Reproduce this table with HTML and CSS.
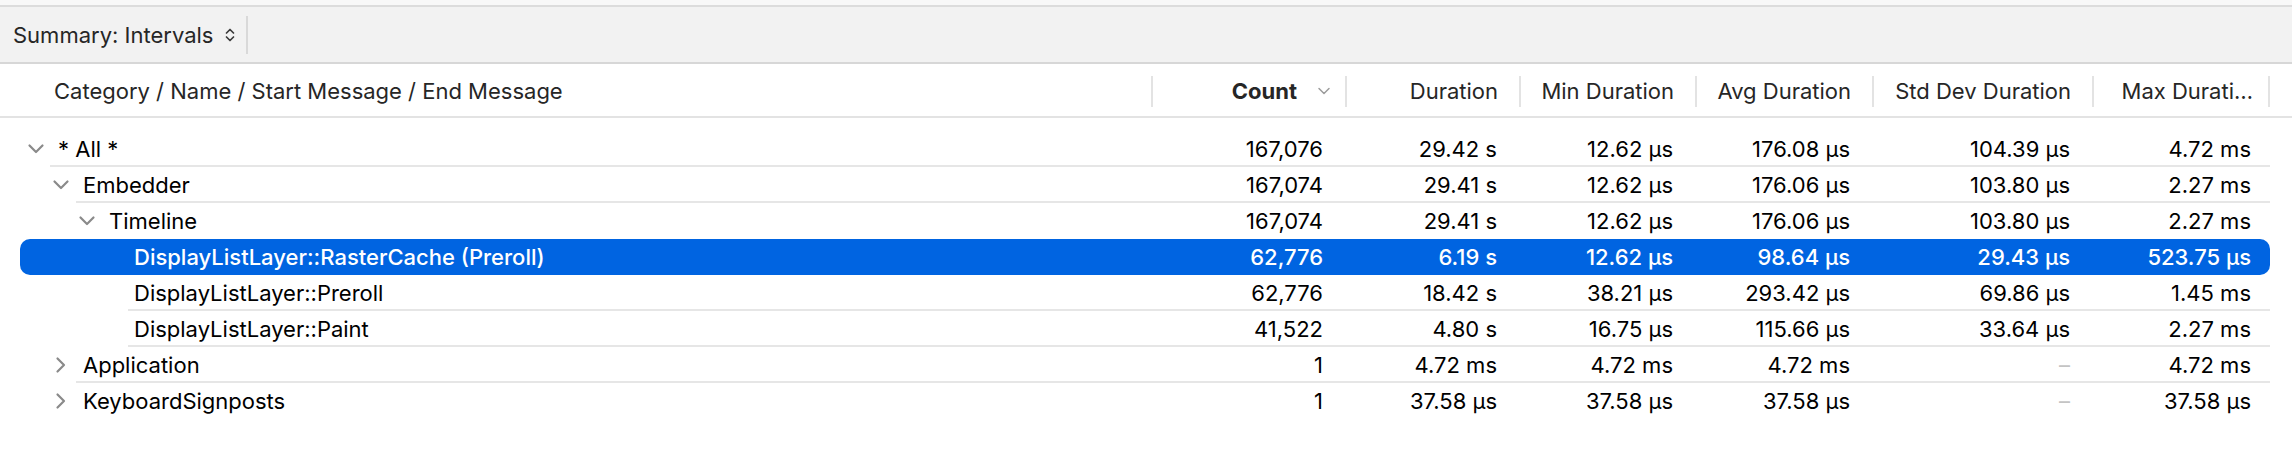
FILE: index.html
```html
<!DOCTYPE html>
<html>
<head>
<meta charset="utf-8">
<link rel="stylesheet" href="styles.css">
</head>
<body>
<div class="window">
  <div class="top-strip"></div>
  <div class="toolbar">
    <div class="popup">
      <span class="popup-label">Summary: Intervals</span>
      <svg class="updown" width="12" height="18" viewBox="0 0 12 18"><path d="M2.5 7 L6 3.5 L9.5 7 M2.5 11 L6 14.5 L9.5 11" fill="none" stroke="#3c3c3c" stroke-width="1.7" stroke-linecap="round" stroke-linejoin="round"/></svg>
    </div>
    <div class="tb-divider"></div>
  </div>
  <div class="header">
    <div class="hcell name-h"><span>Category / Name / Start Message / End Message</span></div>
    <div class="hcell num sorted"><span class="bold">Count</span><svg class="sort" width="14" height="10" viewBox="0 0 14 10"><path d="M2 2.5 L7 7.5 L12 2.5" fill="none" stroke="#9c9c9c" stroke-width="1.5" stroke-linecap="round" stroke-linejoin="round"/></svg></div>
    <div class="hcell num">Duration</div>
    <div class="hcell num">Min Duration</div>
    <div class="hcell num">Avg Duration</div>
    <div class="hcell num">Std Dev Duration</div>
    <div class="hcell num last">Max Durati…</div>
  </div>
  <div class="rows">
    <div class="row l0 sep">
      <div class="name"><span class="disc"><svg width="18" height="12" viewBox="0 0 18 12"><path d="M2.5 2.5 L9 9 L15.5 2.5" fill="none" stroke="#8a8a8a" stroke-width="2.2" stroke-linecap="round" stroke-linejoin="round"/></svg></span><span class="label">* All *</span></div>
      <div class="c">167,076</div><div class="c">29.42 s</div><div class="c">12.62 µs</div><div class="c">176.08 µs</div><div class="c">104.39 µs</div><div class="c last">4.72 ms</div>
    </div>
    <div class="row l1 sep">
      <div class="name"><span class="disc"><svg width="18" height="12" viewBox="0 0 18 12"><path d="M2.5 2.5 L9 9 L15.5 2.5" fill="none" stroke="#8a8a8a" stroke-width="2.2" stroke-linecap="round" stroke-linejoin="round"/></svg></span><span class="label">Embedder</span></div>
      <div class="c">167,074</div><div class="c">29.41 s</div><div class="c">12.62 µs</div><div class="c">176.06 µs</div><div class="c">103.80 µs</div><div class="c last">2.27 ms</div>
    </div>
    <div class="row l2">
      <div class="name"><span class="disc"><svg width="18" height="12" viewBox="0 0 18 12"><path d="M2.5 2.5 L9 9 L15.5 2.5" fill="none" stroke="#8a8a8a" stroke-width="2.2" stroke-linecap="round" stroke-linejoin="round"/></svg></span><span class="label">Timeline</span></div>
      <div class="c">167,074</div><div class="c">29.41 s</div><div class="c">12.62 µs</div><div class="c">176.06 µs</div><div class="c">103.80 µs</div><div class="c last">2.27 ms</div>
    </div>
    <div class="row l3 selected">
      <div class="name"><span class="disc"></span><span class="label">DisplayListLayer::RasterCache (Preroll)</span></div>
      <div class="c">62,776</div><div class="c">6.19 s</div><div class="c">12.62 µs</div><div class="c">98.64 µs</div><div class="c">29.43 µs</div><div class="c last">523.75 µs</div>
    </div>
    <div class="row l3 sep">
      <div class="name"><span class="disc"></span><span class="label">DisplayListLayer::Preroll</span></div>
      <div class="c">62,776</div><div class="c">18.42 s</div><div class="c">38.21 µs</div><div class="c">293.42 µs</div><div class="c">69.86 µs</div><div class="c last">1.45 ms</div>
    </div>
    <div class="row l3 sep">
      <div class="name"><span class="disc"></span><span class="label">DisplayListLayer::Paint</span></div>
      <div class="c">41,522</div><div class="c">4.80 s</div><div class="c">16.75 µs</div><div class="c">115.66 µs</div><div class="c">33.64 µs</div><div class="c last">2.27 ms</div>
    </div>
    <div class="row l1 sep">
      <div class="name"><span class="disc"><svg width="12" height="18" viewBox="0 0 12 18"><path d="M2.5 2.5 L9 9 L2.5 15.5" fill="none" stroke="#8a8a8a" stroke-width="2.2" stroke-linecap="round" stroke-linejoin="round"/></svg></span><span class="label">Application</span></div>
      <div class="c">1</div><div class="c">4.72 ms</div><div class="c">4.72 ms</div><div class="c">4.72 ms</div><div class="c dash">–</div><div class="c last">4.72 ms</div>
    </div>
    <div class="row l1">
      <div class="name"><span class="disc"><svg width="12" height="18" viewBox="0 0 12 18"><path d="M2.5 2.5 L9 9 L2.5 15.5" fill="none" stroke="#8a8a8a" stroke-width="2.2" stroke-linecap="round" stroke-linejoin="round"/></svg></span><span class="label">KeyboardSignposts</span></div>
      <div class="c">1</div><div class="c">37.58 µs</div><div class="c">37.58 µs</div><div class="c">37.58 µs</div><div class="c dash">–</div><div class="c last">37.58 µs</div>
    </div>
  </div>
</div>
</body>
</html>
```

FILE: styles.css
```css
* { box-sizing: border-box; }
html, body { margin: 0; padding: 0; background: #ffffff; }
body {
  width: 2292px;
  height: 452px;
  overflow: hidden;
  font-family: Inter, "Noto Sans", "Liberation Sans", sans-serif;
  font-size: 22px;
  color: #000;
}
.window { width: 2292px; }
.top-strip {
  height: 7px;
  background: #f8f8f8;
  border-bottom: 2px solid #dcdcdc;
}
.toolbar {
  height: 57px;
  background: #f2f2f2;
  border-bottom: 2px solid #d7d7d7;
  display: flex;
  align-items: center;
  padding-left: 13px;
}
.popup {
  display: flex;
  align-items: center;
  gap: 11px;
  color: #262626;
}
.updown { display: block; }
.tb-divider {
  width: 2px;
  height: 38px;
  background: #d9d9d9;
  margin-left: 10px;
}
.header {
  height: 54px;
  padding-top: 2px;
  border-bottom: 2px solid #e3e3e3;
  display: grid;
  grid-template-columns: 1153px 194px 174px 176px 177px 220px 176px;
  align-items: center;
  color: #262626;
}
.hcell {
  height: 31px;
  display: flex;
  align-items: center;
  border-right: 2px solid #e3e3e3;
  white-space: nowrap;
}
.name-h { padding-left: 54px; }
.num { justify-content: flex-end; padding-right: 21px; }
.num.last { padding-right: 15px; }
.sorted { padding-right: 14px; gap: 20px; }
.bold { font-weight: 700; }
.sort { display: block; }
.rows { padding-top: 13px; }
.row {
  height: 36px;
  display: grid;
  grid-template-columns: 1153px 194px 174px 176px 177px 220px 176px;
  align-items: center;
  width: 2270px;
  --sep: 50px;
}
.row.sep {
  background-image: linear-gradient(#e6e6e6, #e6e6e6);
  background-repeat: no-repeat;
  background-size: calc(100% - var(--sep)) 2px;
  background-position: right bottom;
}
.row.l0 { --sep: 50px; }
.row.l1 { --sep: 76px; }
.row.l2 { --sep: 102px; }
.row.l3 { --sep: 128px; }
.name {
  display: flex;
  align-items: center;
  white-space: nowrap;
}
.disc {
  width: 20px;
  height: 20px;
  display: flex;
  align-items: center;
  justify-content: center;
  margin-right: 12px;
}
.disc svg { display: block; }
.l0 .name { padding-left: 26px; }
.l1 .name { padding-left: 51px; }
.l2 .name { padding-left: 77px; }
.l3 .name { padding-left: 102px; }
.c {
  text-align: right;
  padding-right: 24px;
  white-space: nowrap;
}
.c.last { padding-right: 19px; }
.c.dash { color: #c4c4c4; }
.row.selected {
  background: #0064e1;
  color: #ffffff;
  border-radius: 10px;
  margin-left: 20px;
  width: 2250px;
  font-weight: 500;
  grid-template-columns: 1133px 194px 174px 176px 177px 220px 176px;
}
.row.selected .name { padding-left: 82px; }
```
